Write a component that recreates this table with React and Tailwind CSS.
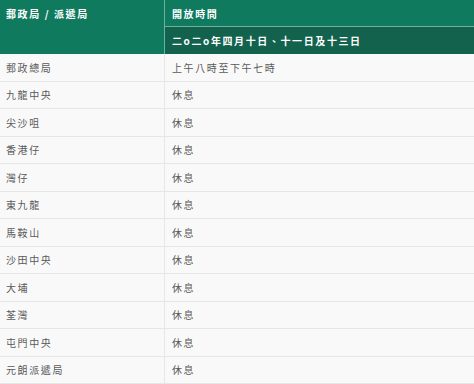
const rows = [
  ['郵政總局', '上午八時至下午七時'],
  ['九龍中央', '休息'],
  ['尖沙咀', '休息'],
  ['香港仔', '休息'],
  ['灣仔', '休息'],
  ['東九龍', '休息'],
  ['馬鞍山', '休息'],
  ['沙田中央', '休息'],
  ['大埔', '休息'],
  ['荃灣', '休息'],
  ['屯門中央', '休息'],
  ['元朗派遞局', '休息'],
]

export default function App() {
  return (
    <div
      className="w-[474px] h-[384px] overflow-hidden bg-[#f9f9f9] text-[10px] tracking-[1.6px]"
      style={{ fontFamily: '"Noto Sans CJK TC", "Noto Sans", sans-serif' }}
    >
      {/* header */}
      <div className="flex h-[54px] text-white font-bold">
        <div className="w-[165px] shrink-0 bg-[#107a5e] border-r border-[#6fb09c] pl-[6px] h-full">
          <div className="h-[27px] flex items-center">郵政局 / 派遞局</div>
        </div>
        <div className="flex-1 flex flex-col">
          <div className="h-[27px] bg-[#107a5e] border-b border-[#6fb09c] flex items-center pl-[7px]">開放時間</div>
          <div className="flex-1 bg-[#13624e] flex items-center pl-[7px]">二o二o年四月十日、十一日及十三日</div>
        </div>
      </div>

      {/* body */}
      {rows.map(([office, hours]) => (
        <div key={office} className="flex h-[27.5px] border-b border-[#e6e6e6] text-[#5a5a5a]">
          <div className="w-[165px] shrink-0 border-r border-[#e6e6e6] flex items-center pl-[6px]">{office}</div>
          <div className="flex-1 flex items-center pl-[7px]">{hours}</div>
        </div>
      ))}
    </div>
  )
}
